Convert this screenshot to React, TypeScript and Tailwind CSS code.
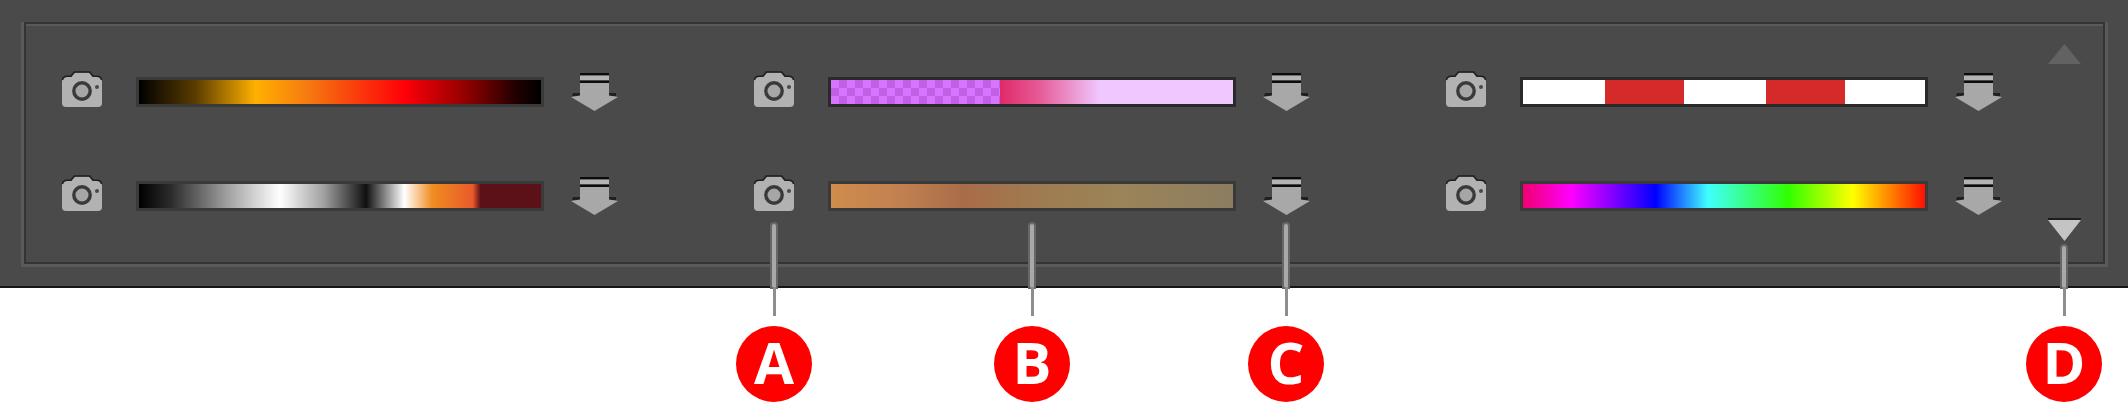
const Camera = () => (
  <svg width="42" height="37" viewBox="0 0 42 37" className="-mt-[6px] shrink-0 blur-[0.4px]">
    <path d="M1 11 Q1 6 6 6 H10 L13.500 1.500 H28.500 L32 6 H36 Q41 6 41 11 V32 Q41 36 37 36 H5 Q1 36 1 32Z" fill="#b2b2b2" />
    <path d="M1.500 9 Q2 5.500 6 5.300 H10 L13.500 1 H28.500 L32 5.300 H36 Q40 5.500 40.500 9" fill="none" stroke="#1e1e1e" strokeWidth="1.600" />
    <circle cx="21" cy="20" r="8.200" fill="#a6a6a6" stroke="#3a3a3a" strokeWidth="3.400" />
    <circle cx="36" cy="16" r="2" fill="#4a4a4a" />
  </svg>
);

const Arrow = () => (
  <svg width="48" height="38" viewBox="0 0 48 38" className="ml-[26px] shrink-0 blur-[0.4px]">
    <rect x="10" y="0" width="29" height="2.500" fill="#0c0c0c" />
    <rect x="10" y="2.500" width="29" height="5" fill="#b4b4b4" />
    <rect x="10" y="7.500" width="29" height="2.500" fill="#0c0c0c" />
    <path d="M3 20 H10 V23 H2Z M39 20 H46 V23 H39Z" fill="#202020" />
    <path d="M10 10 H39 V22.500 L48 24 L24.500 38 L1 24 L10 22.500Z" fill="#a8a8a8" />
  </svg>
);

const Row = ({ bar, frame = "border-[#3a3a3a]" }: { bar: string; frame?: string }) => (
  <div className="flex h-[46px] items-center">
    <Camera />
    <div className={`ml-[33px] box-border h-[30px] w-[408px] shrink-0 border-[3px] ${frame}`}>
      <div className={`h-full w-full ${bar}`} />
    </div>
    <Arrow />
  </div>
);

const Callout = ({ letter, x, top }: { letter: string; x: string; top: string }) => (
  <div className={`absolute top-0 flex w-[76px] flex-col items-center ${x}`}>
    <div className={`w-[4px] rounded-t-full bg-[#a8a8a8] shadow-[0_0_0_2px_#676767] ${top}`} />
    <div className="h-[29px] w-[3px] bg-[#8e8e8e]" />
    <div className="mt-[10px] flex h-[76px] w-[76px] items-center justify-center rounded-full bg-[#ff0000] pb-[4px] font-['Open_Sans',Arial,sans-serif] text-[58px] leading-none font-bold text-white">
      <span className="blur-[0.4px]">{letter}</span>
    </div>
  </div>
);

export default function App() {
  return (
    <div className="relative h-[412px] w-[2128px] overflow-hidden bg-white">
      <div className="box-border h-[288px] border-b-2 border-[#161616] bg-[#4a4a4a] pt-[22px] pr-[20px] pl-[21px]">
        <div className="box-border h-[245px] border-x-[3px] border-b-[3px] border-[#5a5a5a]">
          <div className="box-border h-full border-2 border-[#343434]">
            <div className="box-border flex h-full border-t-2 border-[#5a5a5a]">
              <div className="ml-[35px] grid grid-cols-[692px_692px_557px] grid-rows-[46px_46px] gap-y-[58px] pt-[43px]">
                <Row bar="bg-[linear-gradient(90deg,#000_0%,#5a3c00_14%,#ffb000_29%,#f57a10_42%,#ff0008_66%,#8c0000_82%,#200000_94%,#000_100%)]" />
                <Row
                  frame="border-[#2a2a2a]"
                  bar="bg-[linear-gradient(90deg,transparent_42%,#e02a68_42%,#e65c98_52%,#f0c8ff_67%,#f0c8ff_100%),repeating-conic-gradient(#c060e4_0%_25%,#d874ff_0%_50%)] bg-[size:100%_100%,16px_16px]"
                />
                <Row
                  frame="border-[#2a2a2a]"
                  bar="bg-[linear-gradient(90deg,#fff_0%,#fff_20.400%,#d42a2a_20.400%,#d42a2a_40%,#fff_40%,#fff_60.400%,#d42a2a_60.400%,#d42a2a_80%,#fff_80%,#fff_100%)]"
                />
                <Row bar="bg-[linear-gradient(90deg,#000_0%,#2c2c2c_8%,#a0a0a0_22%,#fff_35%,#a0a0a0_46%,#101010_56.500%,#fff_66%,#f08c20_73%,#e85a2a_83%,#5c1018_85%,#5c1018_100%)]" />
                <Row bar="bg-[linear-gradient(90deg,#d08c4c_0%,#c08050_18%,#a86c48_33%,#a07a50_50%,#9a8458_72%,#8c7c60_100%)]" />
                <Row bar="bg-[linear-gradient(90deg,#f00070_0%,#ff00ff_12%,#0000ff_33%,#40ffff_46%,#30ff00_66%,#ffff00_82%,#ff1000_100%)]" />
              </div>
              <div className="ml-[46px] flex w-[33px] flex-col justify-between pt-[18px] pb-[21px]">
                <svg width="33" height="20" viewBox="0 0 33 20"><path d="M16.500 0 L33 20 H0Z" fill="#626262" /></svg>
                <svg width="33" height="23" viewBox="0 0 33 23">
                  <rect width="33" height="2" fill="#1c1c1c" />
                  <path d="M0 2 H33 L16.500 23Z" fill="#c4c4c4" />
                </svg>
              </div>
            </div>
          </div>
        </div>
      </div>
      <Callout letter="A" x="left-[736px]" top="mt-[224px] h-[63px]" />
      <Callout letter="B" x="left-[994px]" top="mt-[224px] h-[63px]" />
      <Callout letter="C" x="left-[1248px]" top="mt-[224px] h-[63px]" />
      <Callout letter="D" x="left-[2026px]" top="mt-[246px] h-[41px]" />
    </div>
  );
}
